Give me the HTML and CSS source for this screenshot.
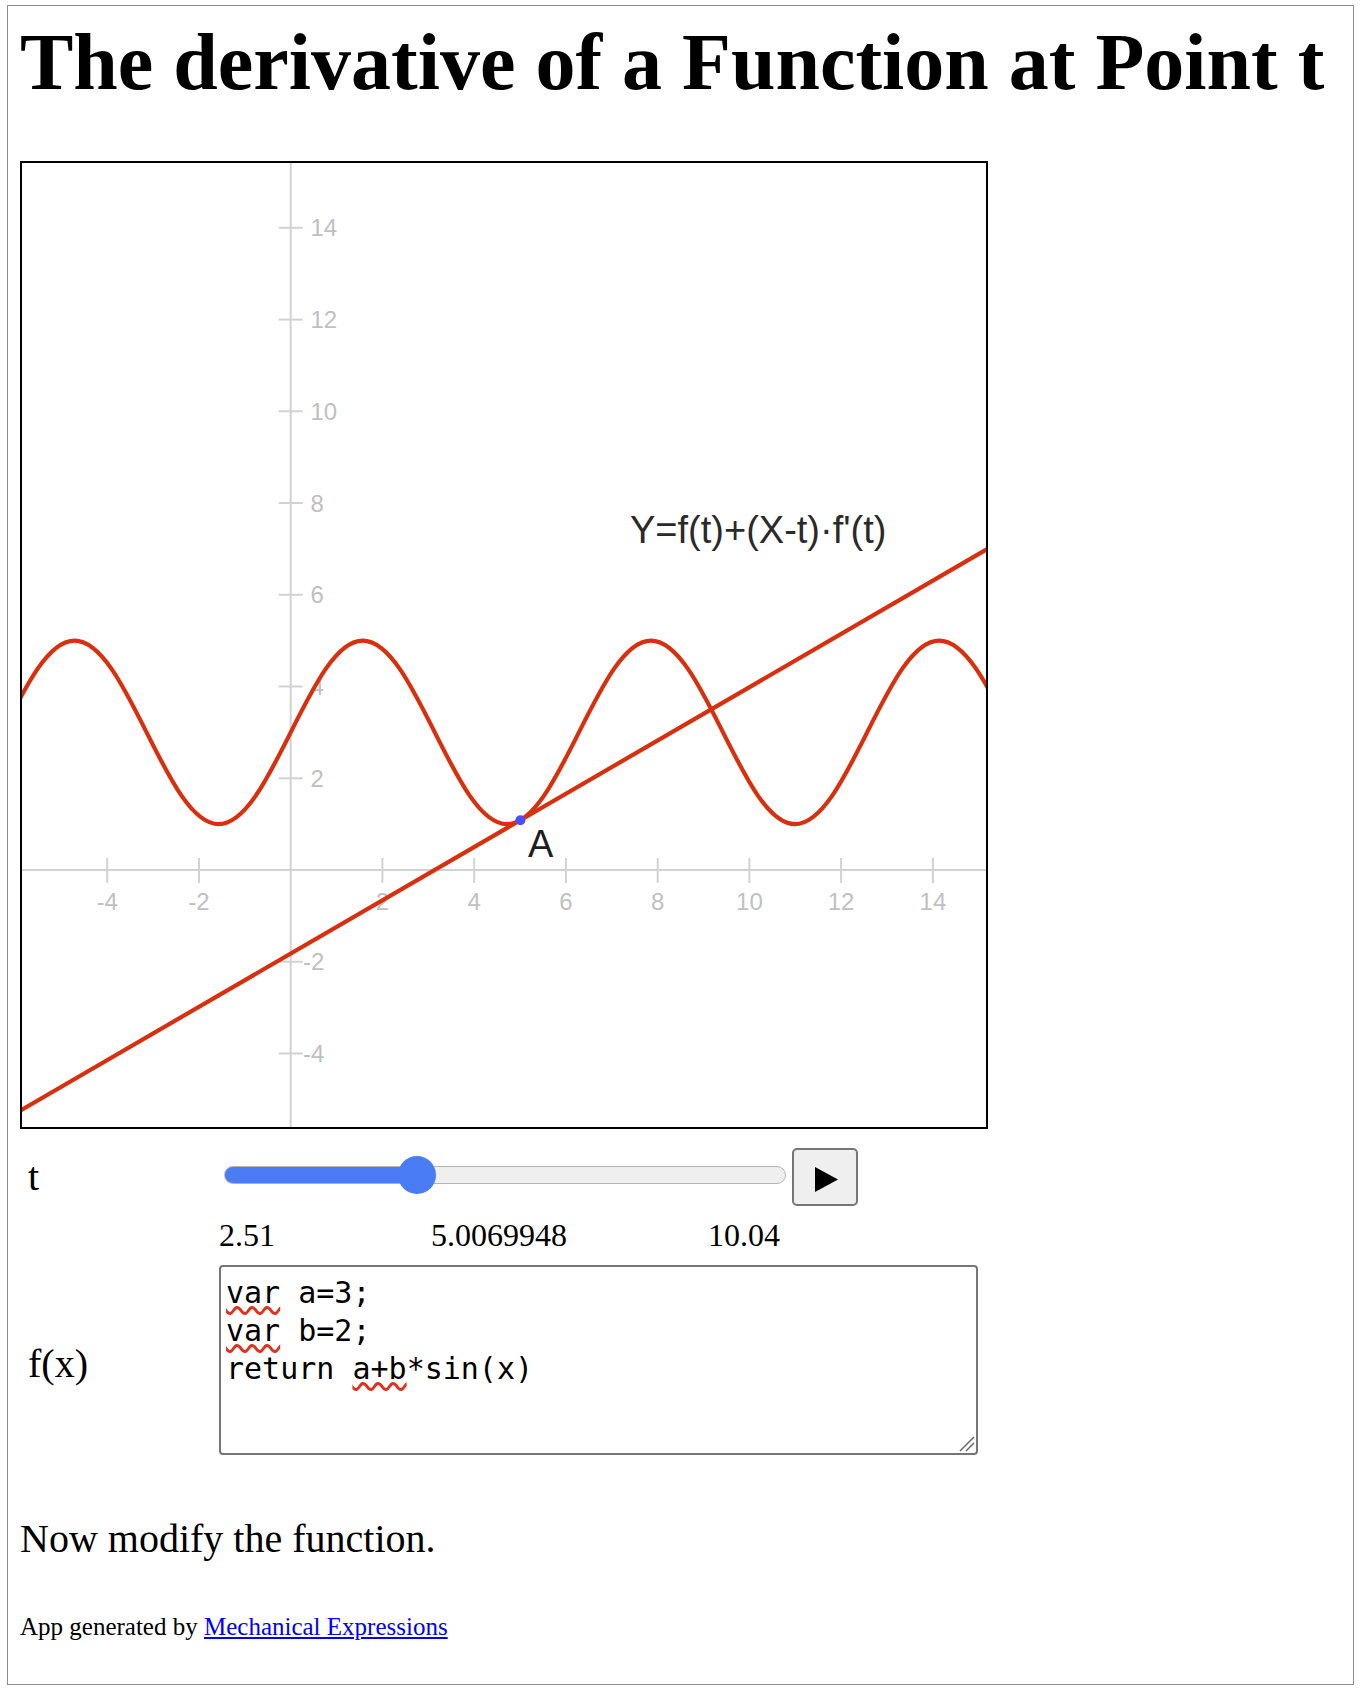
FILE: index.html
```html
<!DOCTYPE html>
<html lang="en">
<head>
<meta charset="utf-8">
<title>The derivative of a Function at Point t</title>
<link rel="stylesheet" href="styles.css">
</head>
<body>
<div class="frame">
  <h1 class="title">The derivative of a Function at Point t</h1>

  <div class="graph">
    <svg class="plot" width="964" height="964" viewBox="0 0 964 964">
      <g class="axes">
        <line x1="0" y1="707" x2="964" y2="707"/>
        <line x1="268.7" y1="0" x2="268.7" y2="964"/>
        <line x1="85.2" y1="695" x2="85.2" y2="720"/>
        <line x1="177" y1="695" x2="177" y2="720"/>
        <line x1="360.4" y1="695" x2="360.4" y2="720"/>
        <line x1="452.2" y1="695" x2="452.2" y2="720"/>
        <line x1="543.9" y1="695" x2="543.9" y2="720"/>
        <line x1="635.7" y1="695" x2="635.7" y2="720"/>
        <line x1="727.4" y1="695" x2="727.4" y2="720"/>
        <line x1="819.1" y1="695" x2="819.1" y2="720"/>
        <line x1="910.9" y1="695" x2="910.9" y2="720"/>
        <line x1="256.7" y1="890.5" x2="280.7" y2="890.5"/>
        <line x1="256.7" y1="798.7" x2="280.7" y2="798.7"/>
        <line x1="256.7" y1="707" x2="280.7" y2="707"/>
        <line x1="256.7" y1="615.3" x2="280.7" y2="615.3"/>
        <line x1="256.7" y1="523.5" x2="280.7" y2="523.5"/>
        <line x1="256.7" y1="431.8" x2="280.7" y2="431.8"/>
        <line x1="256.7" y1="340" x2="280.7" y2="340"/>
        <line x1="256.7" y1="248.3" x2="280.7" y2="248.3"/>
        <line x1="256.7" y1="156.6" x2="280.7" y2="156.6"/>
        <line x1="256.7" y1="64.8" x2="280.7" y2="64.8"/>
      </g>
      <g class="xlabels">
        <text x="85.2" y="747">-4</text>
        <text x="177" y="747">-2</text>
        <text x="360.4" y="747">2</text>
        <text x="452.2" y="747">4</text>
        <text x="543.9" y="747">6</text>
        <text x="635.7" y="747">8</text>
        <text x="727.4" y="747">10</text>
        <text x="819.1" y="747">12</text>
        <text x="910.9" y="747">14</text>
      </g>
      <g class="ylabels">
        <text x="281" y="899">-4</text>
        <text x="281" y="807">-2</text>
        <text x="288.5" y="623.8">2</text>
        <text x="288.5" y="532">4</text>
        <text x="288.5" y="440.3">6</text>
        <text x="288.5" y="348.5">8</text>
        <text x="288.5" y="256.8">10</text>
        <text x="288.5" y="165.1">12</text>
        <text x="288.5" y="73.3">14</text>
      </g>
      <g transform="translate(268.7 707) scale(45.87 -45.87)">
        <path class="curve" d="M -6.283185 3
          c 0.512287,1.024573 1.002314,2 1.570796,2
          c 0.568482,0 1.058509,-0.975427 1.570796,-2
          c 0.512287,-1.024573 1.002314,-2 1.570796,-2
          c 0.568482,0 1.058509,0.975427 1.570796,2
          c 0.512287,1.024573 1.002314,2 1.570796,2
          c 0.568482,0 1.058509,-0.975427 1.570796,-2
          c 0.512287,-1.024573 1.002314,-2 1.570796,-2
          c 0.568482,0 1.058509,0.975427 1.570796,2
          c 0.512287,1.024573 1.002314,2 1.570796,2
          c 0.568482,0 1.058509,-0.975427 1.570796,-2
          c 0.512287,-1.024573 1.002314,-2 1.570796,-2
          c 0.568482,0 1.058509,0.975427 1.570796,2
          c 0.512287,1.024573 1.002314,2 1.570796,2
          c 0.568482,0 1.058509,-0.975427 1.570796,-2
          c 0.512287,-1.024573 1.002314,-2 1.570796,-2
          c 0.568482,0 1.058509,0.975427 1.570796,2"/>
        <line class="curve" x1="-7" y1="-5.88655" x2="17" y2="8.05074"/>
      </g>
      <circle class="point" cx="498.4" cy="657.2" r="5"/>
      <text class="formula" x="608" y="380">Y=f(t)+(X-t)·f'(t)</text>
      <text class="point-label" x="506" y="694">A</text>
    </svg>
  </div>

  <div class="controls">
    <div class="label">t</div>
    <div class="slider-row">
      <input class="slider" type="range" min="2.51" max="10.04" step="any" value="5.0069948" style="--fill: 34.2%">
      <button class="play" type="button" aria-label="Play">
        <svg width="23" height="25" viewBox="0 0 23 25"><polygon points="0,0 23,12.5 0,25" fill="#000"/></svg>
      </button>
    </div>

    <div class="label"></div>
    <div class="values">
      <span class="v-min">2.51</span>
      <span class="v-cur">5.0069948</span>
      <span class="v-max">10.04</span>
    </div>

    <div class="label label-fx">f(x)</div>
    <div class="code" role="textbox" aria-multiline="true">
      <div class="code-line"><span class="typo">var</span> a=3;</div>
      <div class="code-line"><span class="typo">var</span> b=2;</div>
      <div class="code-line">return <span class="typo">a+b</span>*sin(x)</div>
      <svg class="grip" width="18" height="18" viewBox="0 0 18 18"><line x1="17" y1="3" x2="3" y2="17"/><line x1="17" y1="9" x2="9" y2="17"/></svg>
    </div>
  </div>

  <p class="note">Now modify the function.</p>

  <p class="footer">App generated by <a href="#">Mechanical Expressions</a></p>
</div>
</body>
</html>
```

FILE: styles.css
```css
html, body {
  margin: 0;
  padding: 0;
  background: #fff;
}

body {
  font-family: "Liberation Serif", "Times New Roman", serif;
  color: #000;
}

.frame {
  box-sizing: border-box;
  margin: 5px 8px 0 7px;
  height: 1680px;
  border: 1px solid #8c8c8c;
  padding: 0 12px;
}

.title {
  margin: 12px 0 55px;
  font-size: 80px;
  line-height: 88px;
  font-weight: bold;
  white-space: nowrap;
}

.graph {
  width: 964px;
  height: 964px;
  border: 2px solid #000;
  overflow: hidden;
}

.plot {
  display: block;
}

.axes line {
  stroke: #d2d2d2;
  stroke-width: 2;
}

.xlabels text,
.ylabels text {
  font-family: "Liberation Sans", Arial, sans-serif;
  font-size: 24px;
  fill: #c0c0c0;
}

.xlabels text {
  text-anchor: middle;
}

.curve {
  fill: none;
  stroke: #d8300e;
  stroke-width: 4.2;
  stroke-linecap: round;
  stroke-linejoin: round;
  vector-effect: non-scaling-stroke;
}

.point {
  fill: #4b4bff;
}

.formula {
  font-family: "Liberation Sans", Arial, sans-serif;
  font-size: 38px;
  fill: #2a2a2a;
}

.point-label {
  font-family: "Liberation Sans", Arial, sans-serif;
  font-size: 38px;
  fill: #1e1e1e;
}

.controls {
  display: grid;
  grid-template-columns: 199px auto;
  row-gap: 11px;
  margin-top: 19px;
  align-items: center;
}

.label {
  padding-left: 8px;
  font-size: 40px;
  line-height: 46px;
}

.label-fx {
  padding-top: 8px;
}

.slider-row {
  display: flex;
  align-items: center;
  height: 58px;
}

.slider {
  -webkit-appearance: none;
  appearance: none;
  width: 562px;
  height: 40px;
  margin: 0 0 4px 5px;
  padding: 0;
  background: transparent;
}

.slider::-webkit-slider-runnable-track {
  box-sizing: border-box;
  height: 18px;
  border-radius: 9px;
  border: 1px solid #b4b4b4;
  background: linear-gradient(to right, #4a7cf5 0, #4a7cf5 var(--fill), #efefef var(--fill), #efefef 100%);
}

.slider::-webkit-slider-thumb {
  -webkit-appearance: none;
  appearance: none;
  width: 38px;
  height: 38px;
  margin-top: -11px;
  border: none;
  border-radius: 50%;
  background: #4a7cf5;
}

.play {
  box-sizing: border-box;
  width: 66px;
  height: 58px;
  margin-left: 6px;
  padding: 4px 0 0 2px;
  border: 2px solid #767676;
  border-radius: 5px;
  background: #efefef;
  display: flex;
  align-items: center;
  justify-content: center;
}

.play svg {
  display: block;
}

.values {
  display: flex;
  font-size: 32px;
  line-height: 37px;
}

.v-cur {
  margin-left: 156px;
}

.v-max {
  margin-left: 141px;
}

.code {
  position: relative;
  box-sizing: border-box;
  width: 759px;
  height: 190px;
  border: 2px solid #767676;
  border-radius: 4px;
  padding: 7px 5px 2px;
  font-family: "DejaVu Sans Mono", "Liberation Mono", monospace;
  font-size: 30px;
  line-height: 38px;
  color: #000;
}

.code-line {
  white-space: pre;
  height: 38px;
}

.typo {
  text-decoration: underline wavy #e0301e;
  text-decoration-thickness: 2.5px;
  text-underline-offset: 3px;
}

.grip {
  position: absolute;
  right: 1px;
  bottom: 1px;
}

.grip line {
  stroke: #6e6e6e;
  stroke-width: 1.6;
}

.note {
  margin: 61px 0 0;
  font-size: 40px;
  line-height: 46px;
}

.footer {
  margin: 50px 0 0;
  font-size: 25px;
  line-height: 29px;
}

.footer a {
  color: #0000ee;
  text-decoration: underline;
}
```
